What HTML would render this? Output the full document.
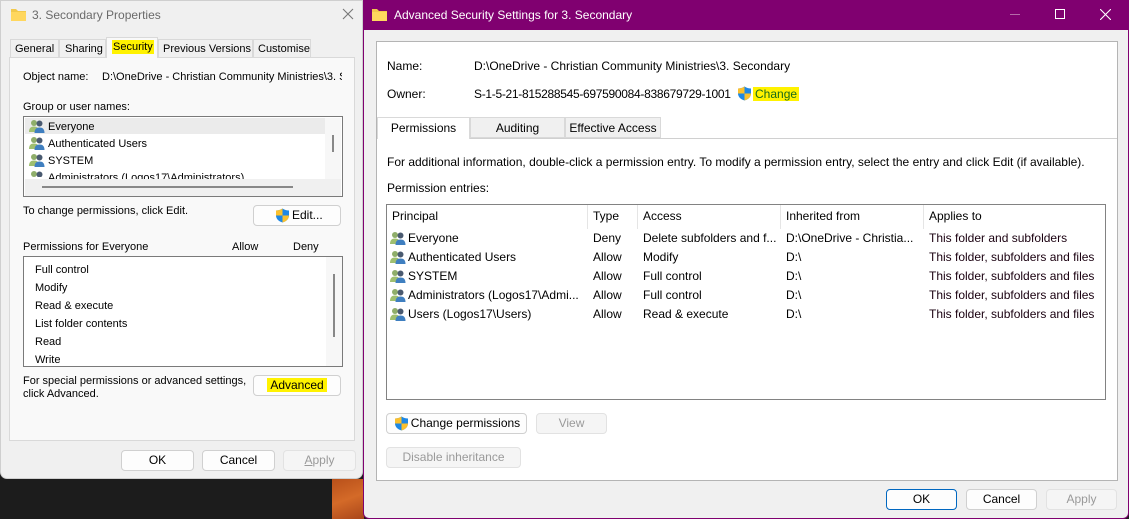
<!DOCTYPE html>
<html><head><meta charset="utf-8"><style>
*{box-sizing:border-box;margin:0;padding:0}
body{width:1129px;height:519px;overflow:hidden;background:#1c1c1c;font-family:"Liberation Sans",sans-serif;font-size:12px;color:#000;position:relative}
.a{position:absolute;white-space:nowrap}
.L{font-size:11px}
.btn{position:absolute;background:#fdfdfd;border:1px solid #d0d0d0;border-radius:4px;text-align:center;line-height:19px;font-size:12px}
.dis{background:#f5f5f5;color:#9a9a9a;border-color:#e2e2e2}
.hl{background:#fff200}
.ic{position:absolute;width:16px;height:14px}
</style></head><body>
<div class="a" style="left:332px;top:479px;width:32px;height:40px;background:linear-gradient(160deg,#b8501a,#d46a28 50%,#a9461a)"></div>

<!-- LEFT DIALOG -->
<div class="a" style="left:0;top:0;width:363px;height:479px;background:#f0f0f0;border-radius:0 0 7px 7px;border:1px solid #cfcfcf"></div>
<svg class="a" style="left:11px;top:8px" width="15" height="13"><path d="M0 1h5l2 2h8v10H0z" fill="#f2c94c"/><path d="M0 4h15v9H0z" fill="#ffd75e"/></svg>
<div class="a" style="left:32px;top:8px;font-size:12px;color:#6a6a6a">3. Secondary Properties</div>
<svg class="a" style="left:342px;top:8px" width="12" height="12"><path d="M1 1L11 11M11 1L1 11" stroke="#777" stroke-width="1.1"/></svg>
<div class="a" style="left:9px;top:57px;width:346px;height:384px;background:#f9f9f9;border:1px solid #d9d9d9"></div>
<div class="a L" style="left:10px;top:39px;width:49px;height:18px;border:1px solid #d9d9d9;border-bottom:none;background:#f0f0f0;padding:3px 0 0 4px">General</div>
<div class="a L" style="left:59px;top:39px;width:47px;height:18px;border:1px solid #d9d9d9;border-bottom:none;background:#f0f0f0;padding:3px 0 0 5px">Sharing</div>
<div class="a L" style="left:106px;top:37px;width:52px;height:21px;border:1px solid #d9d9d9;border-bottom:none;background:#f9f9f9;padding:3px 0 0 5px"><span class="hl" style="padding:1px 1px">Security</span></div>
<div class="a L" style="left:158px;top:39px;width:95px;height:18px;border:1px solid #d9d9d9;border-bottom:none;background:#f0f0f0;padding:3px 0 0 4px">Previous Versions</div>
<div class="a L" style="left:253px;top:39px;width:58px;height:18px;border:1px solid #d9d9d9;border-bottom:none;background:#f0f0f0;padding:3px 0 0 4px">Customise</div>

<div class="a L" style="left:23px;top:71px">Object name:</div>
<div class="a L" style="left:102px;top:71px;width:240px;overflow:hidden">D:\OneDrive - Christian Community Ministries\3. Secondary</div>
<div class="a L" style="left:23px;top:101px">Group or user names:</div>
<div class="a L" style="left:23px;top:116px;width:320px;height:81px;border:1px solid #7a7a7a;background:#fff;overflow:hidden">
 <div class="a" style="left:1px;top:1px;width:300px;height:16px;background:#ebebeb"></div>
 <div class="a" style="left:24px;top:4px">Everyone</div>
 <div class="a" style="left:24px;top:21px">Authenticated Users</div>
 <div class="a" style="left:24px;top:38px">SYSTEM</div>
 <div class="a" style="left:24px;top:55px">Administrators (Logos17\Administrators)</div>
 <div class="a" style="left:1px;top:62px;width:316px;height:17px;background:#f0f0f0"></div>
 <div class="a" style="left:18px;top:69px;width:251px;height:2px;background:#888"></div>
 <div class="a" style="left:301px;top:1px;width:16px;height:61px;background:#f7f7f7"></div>
 <div class="a" style="left:308px;top:18px;width:2px;height:17px;background:#888"></div>
</div>
<div class="a L" style="left:23px;top:205px">To change permissions, click Edit.</div>
<div class="btn L" style="left:253px;top:205px;width:88px;height:21px;text-align:left;padding-left:38px">Edit...</div>
<svg class="a" style="left:275px;top:208px" width="15" height="15"><path d="M7.5 0.5C5 2 3 2.5 1 2.5v5c0 3.5 3 6 6.5 7 3.5-1 6.5-3.5 6.5-7v-5c-2 0-4-.5-6.5-2z" fill="#1e88e5"/><path d="M7.5 0.5V7.5H1v-5c2 0 4-.5 6.5-2zM7.5 7.5H14c0 3.5-3 6-6.5 7z" fill="#fbc02d"/></svg>
<div class="a L" style="left:23px;top:241px">Permissions for Everyone</div>
<div class="a L" style="left:232px;top:241px">Allow</div>
<div class="a L" style="left:293px;top:241px">Deny</div>
<div class="a L" style="left:23px;top:256px;width:320px;height:111px;border:1px solid #7a7a7a;background:#fff">
 <div class="a" style="left:11px;top:7px">Full control</div>
 <div class="a" style="left:11px;top:25px">Modify</div>
 <div class="a" style="left:11px;top:43px">Read &amp; execute</div>
 <div class="a" style="left:11px;top:61px">List folder contents</div>
 <div class="a" style="left:11px;top:79px">Read</div>
 <div class="a" style="left:11px;top:97px">Write</div>
 <div class="a" style="left:302px;top:0;width:16px;height:109px;background:#f7f7f7"></div>
 <div class="a" style="left:309px;top:17px;width:2px;height:63px;background:#888"></div>
</div>
<div class="a L" style="left:23px;top:375px;line-height:13px">For special permissions or advanced settings,<br>click Advanced.</div>
<div class="btn L" style="left:253px;top:375px;width:88px;height:21px"><span class="hl" style="padding:0 3px">Advanced</span></div>
<div class="btn" style="left:121px;top:450px;width:73px;height:21px">OK</div>
<div class="btn" style="left:202px;top:450px;width:73px;height:21px">Cancel</div>
<div class="btn dis" style="left:283px;top:450px;width:73px;height:21px"><u>A</u>pply</div>

<!-- RIGHT DIALOG -->
<div class="a" style="left:363px;top:0;width:766px;height:519px;background:#f0f0f0;border:1px solid #800070;border-top:none;border-radius:0 0 6px 6px"></div>
<div class="a" style="left:363px;top:0;width:766px;height:30px;background:#800070"></div>
<svg class="a" style="left:372px;top:8px" width="15" height="13"><path d="M0 1h5l2 2h8v10H0z" fill="#f2c94c"/><path d="M0 4h15v9H0z" fill="#ffd75e"/></svg>
<div class="a" style="left:394px;top:8px;color:#fff;font-size:12px">Advanced Security Settings for 3. Secondary</div>
<div class="a" style="left:1010px;top:14px;width:10px;height:1px;background:#b56aa9"></div>
<div class="a" style="left:1055px;top:9px;width:10px;height:10px;border:1px solid #fff"></div>
<svg class="a" style="left:1100px;top:9px" width="11" height="11"><path d="M0 0L11 11M11 0L0 11" stroke="#fff" stroke-width="1.1"/></svg>

<div class="a" style="left:376px;top:41px;width:742px;height:440px;background:#fff;border:1px solid #b4b4b4"></div>
<div class="a" style="left:387px;top:59px">Name:</div>
<div class="a" style="left:474px;top:59px">D:\OneDrive - Christian Community Ministries\3. Secondary</div>
<div class="a" style="left:387px;top:87px">Owner:</div>
<div class="a" style="left:474px;top:87px;letter-spacing:-0.3px">S-1-5-21-815288545-697590084-838679729-1001</div>
<svg class="a" style="left:737px;top:86px" width="15" height="15"><path d="M7.5 0.5C5 2 3 2.5 1 2.5v5c0 3.5 3 6 6.5 7 3.5-1 6.5-3.5 6.5-7v-5c-2 0-4-.5-6.5-2z" fill="#1e88e5"/><path d="M7.5 0.5V7.5H1v-5c2 0 4-.5 6.5-2zM7.5 7.5H14c0 3.5-3 6-6.5 7z" fill="#fbc02d"/></svg>
<div class="a hl" style="left:753px;top:87px;color:#1a6a1a;padding:0 2px">Change</div>

<div class="a" style="left:377px;top:138px;width:740px;height:1px;background:#d0d0d0"></div>
<div class="a" style="left:377px;top:117px;width:93px;height:22px;background:#fff;border:1px solid #d9d9d9;border-bottom:none;text-align:center;line-height:20px">Permissions</div>
<div class="a" style="left:470px;top:117px;width:95px;height:21px;background:#f0f0f0;border:1px solid #d9d9d9;text-align:center;line-height:20px">Auditing</div>
<div class="a" style="left:565px;top:117px;width:96px;height:21px;background:#f0f0f0;border:1px solid #d9d9d9;text-align:center;line-height:20px">Effective Access</div>
<div class="a" style="left:387px;top:155px">For additional information, double-click a permission entry. To modify a permission entry, select the entry and click Edit (if available).</div>
<div class="a" style="left:387px;top:181px">Permission entries:</div>

<div class="a" style="left:386px;top:204px;width:720px;height:196px;border:1px solid #828282;background:#fff">
 <div class="a" style="left:200px;top:0;width:1px;height:24px;background:#e5e5e5"></div>
 <div class="a" style="left:250px;top:0;width:1px;height:24px;background:#e5e5e5"></div>
 <div class="a" style="left:393px;top:0;width:1px;height:24px;background:#e5e5e5"></div>
 <div class="a" style="left:536px;top:0;width:1px;height:24px;background:#e5e5e5"></div>
 <div class="a" style="left:5px;top:4px">Principal</div>
 <div class="a" style="left:206px;top:4px">Type</div>
 <div class="a" style="left:256px;top:4px">Access</div>
 <div class="a" style="left:399px;top:4px">Inherited from</div>
 <div class="a" style="left:542px;top:4px">Applies to</div>
</div>

<div class="btn" style="left:386px;top:413px;width:141px;height:21px;padding-left:18px">Change permissions</div>
<svg class="a" style="left:394px;top:416px" width="15" height="15"><path d="M7.5 0.5C5 2 3 2.5 1 2.5v5c0 3.5 3 6 6.5 7 3.5-1 6.5-3.5 6.5-7v-5c-2 0-4-.5-6.5-2z" fill="#1e88e5"/><path d="M7.5 0.5V7.5H1v-5c2 0 4-.5 6.5-2zM7.5 7.5H14c0 3.5-3 6-6.5 7z" fill="#fbc02d"/></svg>
<div class="btn dis" style="left:536px;top:413px;width:71px;height:21px">View</div>
<div class="btn dis" style="left:386px;top:447px;width:135px;height:21px">Disable inheritance</div>
<div class="btn" style="left:886px;top:489px;width:71px;height:21px;border-color:#0067c0">OK</div>
<div class="btn" style="left:966px;top:489px;width:71px;height:21px">Cancel</div>
<div class="btn dis" style="left:1046px;top:489px;width:71px;height:21px">Apply</div>

<svg width="0" height="0" style="position:absolute"><defs><g id="u"><circle cx="5" cy="4" r="3" fill="#8fae6a"/><path d="M0 13c0-4 2-5.5 5-5.5s5 1.5 5 5.5z" fill="#9fbf70"/><circle cx="10.5" cy="4.5" r="3" fill="#4a5a70"/><path d="M5.5 14c0-4 2-5.5 5-5.5s5 1.5 5 5.5z" fill="#3f7fc0"/></g></defs></svg>
<svg class="ic" style="left:29px;top:119px"><use href="#u"/></svg>
<svg class="ic" style="left:29px;top:136px"><use href="#u"/></svg>
<svg class="ic" style="left:29px;top:153px"><use href="#u"/></svg>
<svg class="ic" style="left:29px;top:170px;height:7px"><use href="#u"/></svg>

<svg class="ic" style="left:390px;top:231px"><use href="#u"/></svg>
<svg class="ic" style="left:390px;top:250px"><use href="#u"/></svg>
<svg class="ic" style="left:390px;top:269px"><use href="#u"/></svg>
<svg class="ic" style="left:390px;top:288px"><use href="#u"/></svg>
<svg class="ic" style="left:390px;top:307px"><use href="#u"/></svg>
<div class="a" style="left:408px;top:229px;line-height:19px">Everyone<br>Authenticated Users<br>SYSTEM<br>Administrators (Logos17\Admi...<br>Users (Logos17\Users)</div>
<div class="a" style="left:593px;top:229px;line-height:19px">Deny<br>Allow<br>Allow<br>Allow<br>Allow</div>
<div class="a" style="left:643px;top:229px;line-height:19px">Delete subfolders and f...<br>Modify<br>Full control<br>Full control<br>Read &amp; execute</div>
<div class="a" style="left:786px;top:229px;line-height:19px">D:\OneDrive - Christia...<br>D:\<br>D:\<br>D:\<br>D:\</div>
<div class="a" style="left:929px;top:229px;line-height:19px;color:#1a0010">This folder and subfolders<br>This folder, subfolders and files<br>This folder, subfolders and files<br>This folder, subfolders and files<br>This folder, subfolders and files</div>
</body></html>
